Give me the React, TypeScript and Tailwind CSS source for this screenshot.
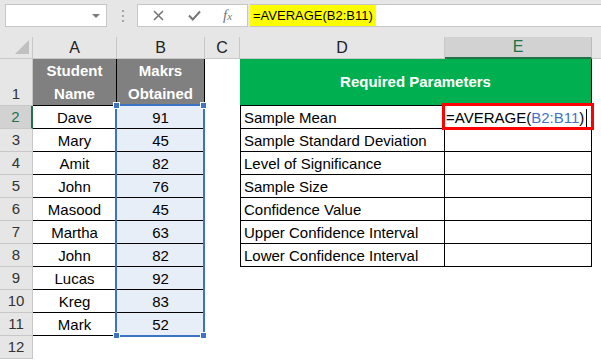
import React from 'react'

const students = [
  ['Dave', 91],
  ['Mary', 45],
  ['Amit', 82],
  ['John', 76],
  ['Masood', 45],
  ['Martha', 63],
  ['John', 82],
  ['Lucas', 92],
  ['Kreg', 83],
  ['Mark', 52],
] as const

const params = [
  'Sample Mean',
  'Sample Standard Deviation',
  'Level of Significance',
  'Sample Size',
  'Confidence Value',
  'Upper Confidence Interval',
  'Lower Confidence Interval',
]

function Toolbar() {
  return (
    <div className="flex h-[37px] items-start bg-[#e6e6e6] pt-[4px]">
      {/* name box */}
      <div className="ml-[5px] flex h-[23px] w-[102px] items-center justify-end border border-[#c6c6c6] bg-white pr-[6px]">
        <div className="h-0 w-0 border-x-[4px] border-t-[4px] border-x-transparent border-t-[#7a7a7a]" />
      </div>
      {/* grip */}
      <div className="ml-[15px] mt-[6px] flex flex-col gap-[3px]">
        <span className="h-[2px] w-[2px] bg-[#a6a6a6]" />
        <span className="h-[2px] w-[2px] bg-[#a6a6a6]" />
        <span className="h-[2px] w-[2px] bg-[#a6a6a6]" />
      </div>
      {/* cancel / enter / fx */}
      <div className="ml-[13px] flex h-[23px] w-[111px] items-center border border-[#c6c6c6] bg-white">
        <svg className="ml-[15px]" width="11" height="11" viewBox="0 0 11 11">
          <path d="M1 1 L10 10 M10 1 L1 10" stroke="#767676" strokeWidth="1.6" />
        </svg>
        <svg className="ml-[24px]" width="13" height="11" viewBox="0 0 13 11">
          <path d="M1 5.5 L4.8 9.5 L12 1.5" stroke="#767676" strokeWidth="2" fill="none" />
        </svg>
        <span className="ml-[22px] font-['Liberation_Serif',serif] text-[15px] italic leading-none text-[#767676]">
          f<span className="text-[11px]">x</span>
        </span>
      </div>
      {/* formula input */}
      <div className="ml-[2px] flex h-[23px] flex-1 items-stretch border-y border-[#c6c6c6] bg-white">
        <div className="flex items-center bg-[#ffff00] px-[3px] text-[13px] text-black">=AVERAGE(B2:B11)</div>
      </div>
    </div>
  )
}

function ColHead({ label, active }: { label: string; active?: boolean }) {
  return active ? (
    <div className="flex items-center justify-center border-r border-b-2 border-r-[#bcbcbc] border-b-[#217346] bg-[#d2d2d2] text-[16px] text-[#217346]">
      {label}
    </div>
  ) : (
    <div className="flex items-center justify-center border-r border-b border-[#c8c8c8] bg-[#e6e6e6] text-[16px] text-[#222]">
      {label}
    </div>
  )
}

function RowHead({ n, active }: { n: number; active?: boolean }) {
  return active ? (
    <div className="flex items-end justify-center border-r-2 border-b border-r-[#217346] border-b-[#c8c8c8] bg-[#d2d2d2] pb-[1px] text-[15px] leading-[20px] text-[#217346]">
      {n}
    </div>
  ) : (
    <div className="flex items-end justify-center border-r border-b border-[#c8c8c8] bg-[#e6e6e6] pb-[1px] text-[15px] leading-[20px] text-[#333]">
      {n}
    </div>
  )
}

function Handle({ className }: { className: string }) {
  return <div className={`absolute h-[7px] w-[7px] border border-white bg-[#3d73c4] ${className}`} />
}

export default function App() {
  return (
    <div className="h-[360px] w-[601px] overflow-hidden bg-white font-['Liberation_Sans',sans-serif] text-black">
      <Toolbar />
      <div className="grid grid-cols-[33px_84px_88px_35px_205px_147px_9px] grid-rows-[22px_47px_repeat(11,23px)]">
        {/* column headers */}
        <div className="relative border-r border-b border-[#c8c8c8] bg-[#e6e6e6]">
          <div className="absolute right-[3px] bottom-[4px] h-0 w-0 border-b-[14px] border-l-[14px] border-b-[#c0c0c0] border-l-transparent" />
        </div>
        <ColHead label="A" />
        <ColHead label="B" />
        <ColHead label="C" />
        <ColHead label="D" />
        <ColHead label="E" active />
        <div className="border-b border-[#c8c8c8] bg-[#e6e6e6]" />

        {/* row 1 */}
        <RowHead n={1} />
        <div className="flex items-end justify-center border-r border-b border-black bg-[#808080] text-center text-[15px] leading-[23px] font-bold text-white">
          Student
          <br />
          Name
        </div>
        <div className="flex items-end justify-center border-r border-b border-black bg-[#808080] text-center text-[15px] leading-[23px] font-bold text-white">
          Makrs
          <br />
          Obtained
        </div>
        <div />
        <div className="col-span-2 flex items-center justify-center border-r border-b border-black bg-[#00b050] text-[15px] font-bold text-white">
          Required Parameters
        </div>
        <div />

        {/* rows 2–11 */}
        {students.map(([name, mark], i) => {
          const row = i + 2
          const param = params[i]
          return (
            <React.Fragment key={row}>
              <RowHead n={row} active={row === 2} />
              <div className="flex items-end justify-center border-r border-b border-black text-[15px] leading-[21px]">
                {name}
              </div>
              <div className="relative flex items-end justify-center border-r border-b border-black bg-[#e8eef8] text-[15px] leading-[21px]">
                {mark}
                {row === 2 && (
                  <div className="pointer-events-none absolute -top-[2px] -left-[2px] z-10 h-[233px] w-[90px] border-2 border-[#3d73c4]">
                    <Handle className="-top-[4px] -left-[4px]" />
                    <Handle className="-top-[4px] -right-[4px]" />
                    <Handle className="-bottom-[4px] -left-[4px]" />
                    <Handle className="-bottom-[4px] -right-[4px]" />
                  </div>
                )}
              </div>
              <div />
              {param ? (
                <>
                  <div className="flex items-end border-l border-r border-b border-black pl-[3px] text-[15px] leading-[21px]">
                    {param}
                  </div>
                  <div className="relative flex items-end border-r border-b border-black pl-[1px] text-[15px] leading-[21px]">
                    {row === 2 && (
                      <>
                        <span>=AVERAGE(</span>
                        <span className="text-[#4472c4]">B2:B11</span>
                        <span>)</span>
                        <span className="mb-[1px] ml-[2px] h-[18px] w-px bg-black" />
                        <div className="pointer-events-none absolute -top-[3px] -left-[3px] -right-[3px] -bottom-[2px] border-[3px] border-[#ff0000]" />
                      </>
                    )}
                  </div>
                </>
              ) : (
                <>
                  <div />
                  <div />
                </>
              )}
              <div />
            </React.Fragment>
          )
        })}

        {/* row 12 */}
        <RowHead n={12} />
      </div>
    </div>
  )
}
